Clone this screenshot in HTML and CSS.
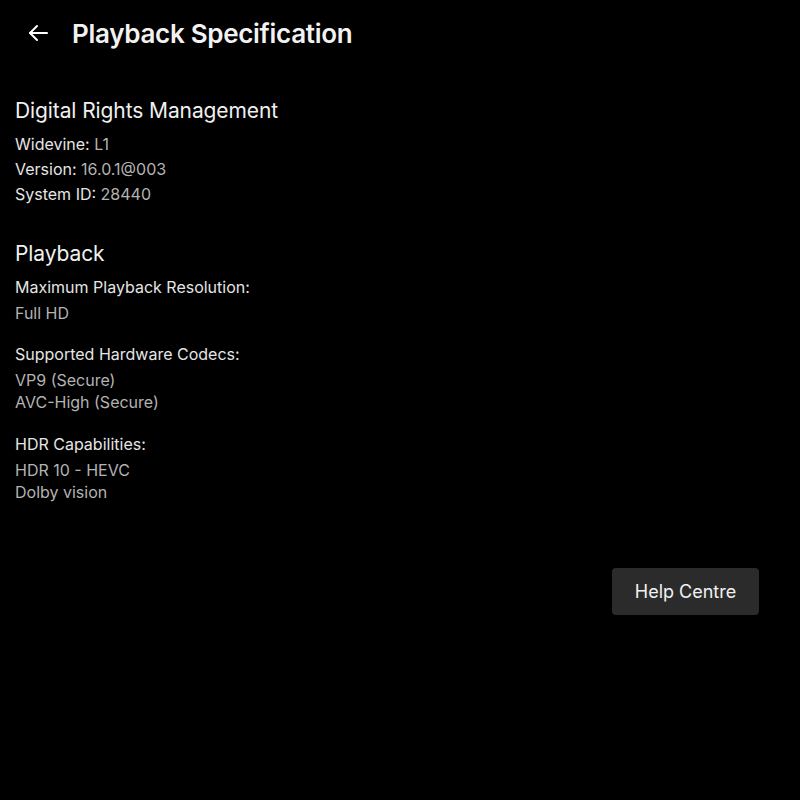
FILE: index.html
```html
<!DOCTYPE html>
<html>
<head>
    <title>Playback Specification</title>
    <meta name="viewport" content="width=device-width, initial-scale=1.0">
    <link rel="stylesheet" href="styles.css">
</head>
<body>
    <div class="header">
        <button class="back" aria-label="Back">
            <svg width="24" height="24" viewBox="0 0 24 24" fill="none" stroke="#ffffff" stroke-width="2" stroke-linecap="round" stroke-linejoin="round">
                <path d="M21 12H4"/>
                <path d="M11 5l-7 7 7 7"/>
            </svg>
        </button>
        <h1>Playback Specification</h1>
    </div>

    <div class="section">
        <h2>Digital Rights Management</h2>
        <div class="row">Widevine: <span class="value">L1</span></div>
        <div class="row">Version: <span class="value">16.0.1@003</span></div>
        <div class="row">System ID: <span class="value">28440</span></div>
    </div>

    <div class="section">
        <h2>Playback</h2>
        <div class="group">
            <div class="label">Maximum Playback Resolution:</div>
            <div class="values">
                <div>Full HD</div>
            </div>
        </div>
        <div class="group">
            <div class="label">Supported Hardware Codecs:</div>
            <div class="values">
                <div>VP9 (Secure)</div>
                <div>AVC-High (Secure)</div>
            </div>
        </div>
        <div class="group">
            <div class="label">HDR Capabilities:</div>
            <div class="values">
                <div>HDR 10 - HEVC</div>
                <div>Dolby vision</div>
            </div>
        </div>
    </div>

    <div class="actions">
        <button class="help">Help Centre</button>
    </div>
</body>
</html>
```

FILE: styles.css
```css
* {
    box-sizing: border-box;
    margin: 0;
    padding: 0;
}

body {
    font-family: Inter, "Noto Sans", sans-serif;
    background: #000;
    color: #e5e5e5;
    width: 800px;
    height: 800px;
}

.header {
    display: flex;
    align-items: center;
    gap: 22px;
    height: 66px;
    padding-left: 26px;
}

.back {
    display: flex;
    background: none;
    border: none;
    cursor: pointer;
}

h1 {
    font-size: 26px;
    font-weight: 600;
    color: #f2f2f2;
    letter-spacing: -0.3px;
}

.section {
    padding: 0 15px;
}

.section + .section {
    margin-top: 32px;
}

.header + .section {
    margin-top: 30px;
}

h2 {
    font-size: 21px;
    font-weight: 400;
    line-height: 30px;
    color: #f0f0f0;
    letter-spacing: -0.1px;
    margin-bottom: 6px;
}

.row {
    font-size: 16px;
    line-height: 25px;
}

.value,
.values {
    color: #b3b3b3;
}

.group {
    font-size: 16px;
    line-height: 22px;
}

.group + .group {
    margin-top: 18px;
}

.group:last-child {
    margin-top: 19px;
}

.label {
    line-height: 25px;
}

.values {
    margin-top: 2px;
}

.actions {
    display: flex;
    justify-content: flex-end;
    padding-right: 41px;
    margin-top: 65px;
}

.help {
    font-family: Inter, "Noto Sans", sans-serif;
    font-size: 18px;
    color: #f2f2f2;
    background: #2b2b2b;
    border: none;
    border-radius: 4px;
    width: 147px;
    height: 47px;
    cursor: pointer;
}
```
